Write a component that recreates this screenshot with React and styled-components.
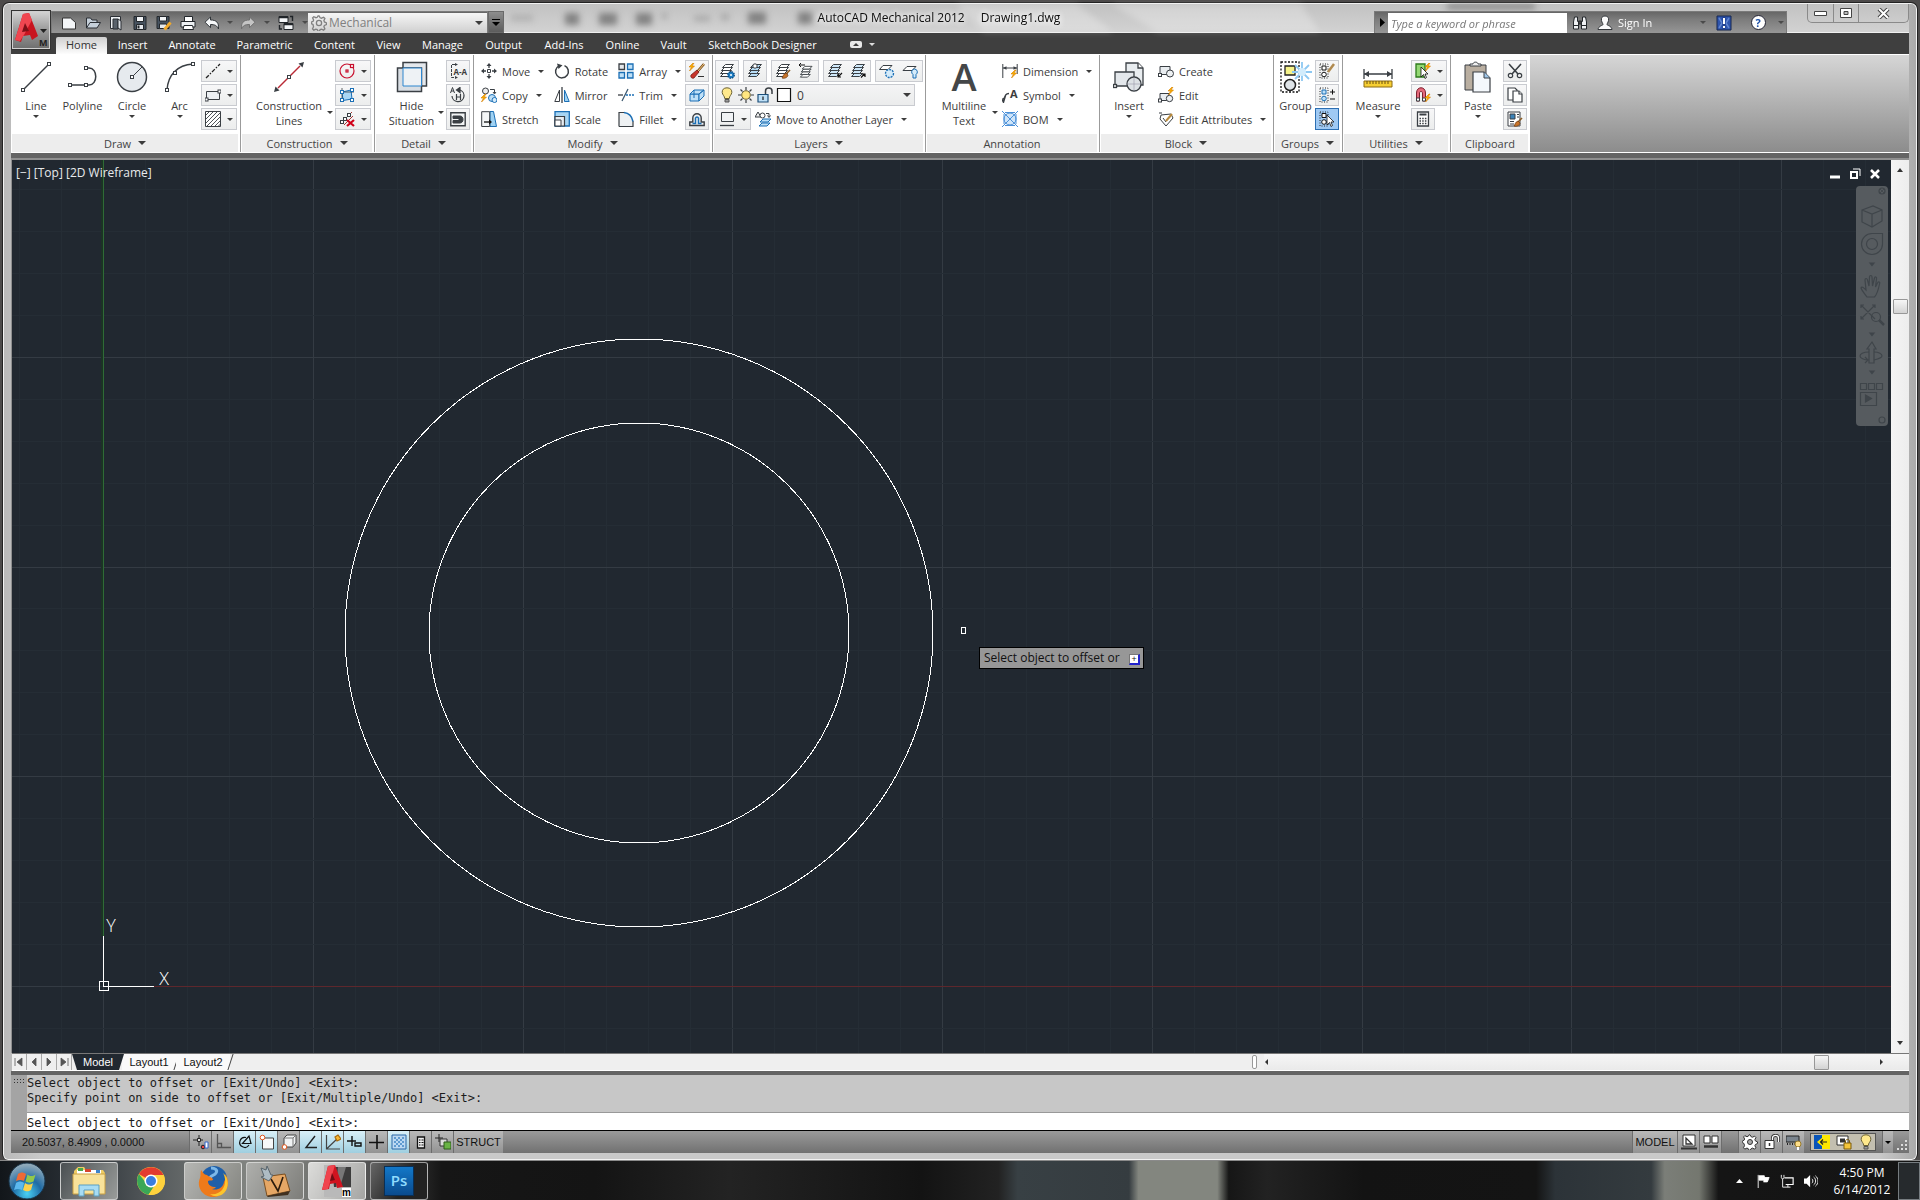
import React from "react";
import styled, { createGlobalStyle, css } from "styled-components";

const UI = '"Open Sans", "Noto Sans", sans-serif';
const SANS = '"Liberation Sans", Arial, sans-serif';
const MONO = '"DejaVu Sans Mono", "Liberation Mono", monospace';

const GlobalStyle = createGlobalStyle`
  *, *::before, *::after { box-sizing: border-box; }
  body { margin: 0; background: #4c4a4a; font-family: ${UI}; font-size: 11px; color: #3c3c3c; overflow: hidden; }
  button, input, select { font: inherit; color: inherit; margin: 0; padding: 0; border: 0; background: none; border-radius: 0; }
  button { display: flex; align-items: center; justify-content: center; white-space: nowrap; }
  select { appearance: none; outline: none; }
  svg { display: block; flex: none; }
`;

/* ---------- icons ---------- */

const K = "#3a3f44";
const B = "#1b6fb5";
const LB = "#bfe0f7";
const bolt = (x, y) => (
  <path d={`M${x + 4} ${y}l-4 4h2.5l-2 4 5-5h-2.5l2-3z`} fill="#ffb300" stroke="#d27a00" strokeWidth=".6" />
);
const node = (x, y, c = K) => <rect key={`${x}-${y}`} x={x - 1.5} y={y - 1.5} width="3" height="3" fill="#fff" stroke={c} />;
const brush = (x, y) => (
  <g transform={`translate(${x} ${y})`}>
    <path d="M9 0L5 4" stroke="#8a5a20" strokeWidth="1.6" />
    <path d="M5 3l2 2c0 2-3 4-6 3 1-1 1-4 4-5z" fill="#c8742a" stroke="#6b3a10" strokeWidth=".7" />
  </g>
);
const sheets = (c = "#fff") => (
  <g fill={c} stroke={K}>
    <path d="M4.500 10.500h8l-3 3h-8z" />
    <path d="M4.500 7.500h8l-3 3h-8z" />
    <path d="M5.500 4.500h8l-3 3h-8z" />
    <path d="M6.500 1.500h8l-3 3h-8z" />
  </g>
);
const gearPath =
  "M8 .8l1.200 2 1.300.4L12.600 2.200l1.300 1.300-1 2.100.5 1.300 2.100 1v1.600l-2.100 1-.5 1.200 1 2.100-1.300 1.300-2.100-1-1.300.5-1 1.700H7.200l-1-1.700-1.300-.5-2.100 1-1.300-1.300 1-2.100L2 9.500.3 8.600V7.200l1.800-1 .5-1.200-1-2.100 1.200-1.200 2.200 1 1.200-.4.900-1.500z";

const ICONS = {
  /* quick access */
  new: <path d="M1.500 3h8l5 4.500V14h-13z" fill="#f4f6f8" stroke="#333" />,
  open: <path d="M1.500 13V3h4l1.500 2h5v2.500M1.500 13L5 7.500h10.500L12 13z" fill="#c6d0da" stroke="#2b2f35" />,
  sheetset: <g stroke="#2b2f35"><path d="M2.500 1.500h10v12h-10z" fill="#eef1f4" /><path d="M5 4h5v10H5z" fill="#59626c" /><path d="M10 4l3 2v9l-3-2z" fill="#dfe4e9" /></g>,
  save: <g stroke="#22262b"><path d="M2 1.500h12v13H2z" fill="#46525f" /><path d="M4.500 1.500h7v5h-7z" fill="#f2f4f6" /><path d="M4.500 9.500h7v5h-7z" fill="#e5e9ed" /><path d="M6.500 10.500v3" strokeWidth="2" /></g>,
  saveas: <g stroke="#22262b"><path d="M1 1.500h12v12H1z" fill="#46525f" /><path d="M3.500 1.500h7v4.500h-7z" fill="#f2f4f6" /><path d="M3.500 9h7v4.500h-7z" fill="#e5e9ed" /><path d="M14.500 7.500l-6 7" stroke="#f0a92c" strokeWidth="3" /></g>,
  print: <g stroke="#22262b"><path d="M4.500 1.500h8v5h-8z" fill="#fff" /><path d="M1 6.500h14v5.500H1z" fill="#eceff2" /><path d="M4 10.500h8.500l1 4h-10.500z" fill="#fff" /></g>,
  undo: <path d="M6.500 2v3c6 0 8.500 2.500 8 9-1.500-3.500-3.500-4.500-8-4.500v3.200L1 7.200z" fill="#f7f9fa" stroke="#30353a" />,
  redo: <path d="M9.500 2v3c-6 0-8.500 2.500-8 9 1.500-3.500 3.500-4.500 8-4.500v3.200L15 7.200z" fill="#c4c4c4" stroke="#6f6f6f" />,
  switch: <g stroke="#202428"><path d="M1 1.500h9v6H1zM6 8.500h9v6H6z" fill="#f4f6f8" /><path d="M1 2.500h9M6 9.500h9" strokeWidth="1.500" /><path d="M12 1.500h2.500V6M1.500 10v4H4" fill="none" strokeWidth="1.400" /></g>,
  gear: <g fill="none" stroke="currentColor" strokeWidth="1.300"><path d={gearPath} /><circle cx="8" cy="8" r="2.600" /></g>,
  binoc: <g fill="#f0f2f4" stroke="#24282c"><path d="M2.500 2h3v4l1 1.500V14h-5V7zM10.500 2h3l1 5v7h-5V7.500l1-1.500z" /><path d="M6.500 6h3v3h-3z" fill="#444" /><path d="M1.500 10.500h5M9.500 10.500h5" /></g>,
  person: <path d="M8 1c3 0 4 2 3.500 4.500C11 8 10 8.500 10 9.500c0 1 4.500 1.200 5 5H1c.5-3.800 5-4 5-5 0-1-1-1.500-1.500-4C4 3 5 1 8 1z" fill="#fbfbfb" stroke="#33373b" />,
  exchange: <g><path d="M1 1h14v14H1z" fill="#2f55ad" stroke="#16264f" /><path d="M3 3l3 5-3 5M13 3l-3 5 3 5" fill="none" stroke="#6286d0" strokeWidth="1.500" /><path d="M6.500 1.500h3v13h-3z" fill="#23418c" /><path d="M8 3v6M8 11v2" stroke="#fff" strokeWidth="2" /></g>,
  /* draw */
  line: <g stroke={K}><path d="M4 28L28 4" strokeWidth="1.500" />{node(3, 29)}{node(29, 3)}</g>,
  polyline: <g stroke={K} fill="none" strokeWidth="1.500"><path d="M18 7h4c9 0 9 17 0 17H3" /><g strokeWidth="1">{node(19, 7)}{node(19, 24)}{node(3, 24)}</g></g>,
  circle: <g stroke={K}><circle cx="16" cy="16" r="14.500" fill="#e6eaee" strokeWidth="1.500" /><path d="M16 16L26 6" />{node(16, 16)}</g>,
  arc: <g stroke={K} fill="none" strokeWidth="1.500"><path d="M3 29C4 14 13 4 29 3" /><g strokeWidth="1">{node(3, 29)}{node(11, 12)}{node(29, 3)}</g></g>,
  dashline: <path d="M1 15L15 1" stroke="#222" strokeWidth="1.300" strokeDasharray="4 1.500 1.500 1.500" />,
  rect: <g stroke={K}><path d="M1.500 4.500h13v8h-13z" fill="#eceff2" />{node(1.5, 12.5)}{node(14.5, 4.500)}</g>,
  hatch: <g stroke={K}><path d="M.5.500h15v15H.5z" fill="#fff" /><path d="M.5 4.500l4-4M.5 8.500l8-8M.5 12.500l12-12M1.500 15.500l14-14M5.500 15.500l10-10M9.500 15.500l6-6M13 15.500l2.500-2.500" strokeWidth=".9" /></g>,
  /* construction */
  cline: <g><path d="M5 27L27 5" stroke="#b92b36" strokeWidth="1.400" /><path d="M31 1l-1.500 5.500-4-4zM1 31l1.500-5.500 4 4z" fill={K} />{node(16, 16)}</g>,
  ccircle: <g stroke="#c8102e" fill="none" strokeWidth="1.200"><circle cx="8" cy="8" r="7" /><rect x="7" y="7" width="2" height="2" />{node(13, 3, "#c8102e")}</g>,
  cpoly: <g stroke={B}><path d="M3 5l9-2 1 9-9 1.500z" fill="#a9d6f5" /><path d="M1 5h14M3 1v14" stroke={K} strokeWidth=".8" />{node(3, 13, B)}{node(13, 3, B)}{node(13, 13, B)}{node(3, 5, B)}</g>,
  cdel: <g><path d="M1 13L13 1M5 14l9-9" stroke="#a33" /><g stroke={K}>{node(6, 8)}{node(10, 4)}{node(3, 11)}</g><path d="M8 9l7 6M15 9l-7 6" stroke="#d00018" strokeWidth="2.200" /></g>,
  /* detail */
  hide: <g><path d="M7 1.500h23.500V25H7z" fill="#e4e8ec" stroke={K} strokeWidth="1.500" /><path d="M1.500 7h24v23.500h-24z" fill="#d9dee3" stroke={K} strokeWidth="1.500" /><path d="M7 7h18.500v18H7z" fill="#eef2f5" stroke="#2d86cf" /></g>,
  section: <g stroke={K} fill="none"><path d="M5 1.500H1.500v13H5" strokeDasharray="3 1" /><path d="M5 0l3 1.500L5 3zM5 13l3 1.500L5 16z" fill={K} stroke="none" /></g>,
  detaila: <g stroke={K} fill="none" strokeWidth="1.200"><path d="M2 9a6 6 0 1 0 8-6" /><path d="M10 0.500L6.500 3 10 5.500z" fill={K} /><path d="M6.500 7v6M10.500 7v6M6.500 10h4" /><path d="M.5 6L2.500 0.500 4.500 6M1 4h3" strokeWidth="1" /></g>,
  cutout: <g stroke={K}><path d="M.8 1.800h14.400v13H.8z" fill="#f2f4f5" strokeWidth="1.400" /><path d="M3 5h7c4 0 4 7 0 7H3V9.500h6V7.500H3z" fill={K} /></g>,
  /* modify */
  move: <g fill={K}><path d="M8 0l2.500 3h-5zM8 16l-2.500-3h5zM0 8l3-2.500v5zM16 8l-3 2.500v-5z" /><path d="M8 3v2M8 11v2M3 8h2M11 8h2" stroke={K} strokeWidth="1.300" /><path d="M6.500 6.500h3v3h-3z" fill="#fff" stroke={K} /></g>,
  copy: <g><circle cx="4.500" cy="4" r="3" fill="#eee" stroke={K} /><circle cx="11" cy="11" r="3.500" fill={LB} stroke={B} /><circle cx="13.500" cy="13" r="2.500" fill="#d6ecfb" stroke={B} /><path d="M9 2.500h4.500V6M12 5l1.500 2L15 5" fill="none" stroke={K} />{bolt(0, 7)}</g>,
  stretch: <g><path d="M9 .5h3.500l3 15H9z" fill="#9fd2f3" stroke={B} /><path d="M.7.700h8v14.800h-8z" fill="#f4f6f7" stroke={K} /><path d="M3 11h5" stroke="#111" strokeWidth="1.300" /><path d="M8 8.500l3 2.500-3 2.500z" fill="#111" /></g>,
  rotate: <g fill="none" stroke={K} strokeWidth="1.500"><path d="M10.500 2.600a6.400 6.400 0 1 1-5.500.2" /><path d="M3 0.500l5.500 1.800L4.500 6z" fill={K} stroke="none" /></g>,
  mirror: <g><path d="M5.500 3v11.500H.8z" fill="#fff" stroke={K} /><path d="M10.500 3v11.500h4.700z" fill="#9fd2f3" stroke={B} /><path d="M8 0v16" stroke={K} strokeWidth="1.300" /></g>,
  scale: <g><path d="M1 .700h14.300V15H1z" fill="#a8d6f4" stroke={B} strokeWidth="1.300" /><path d="M1 5.500h9.500V15H1z" fill="#e8edf1" stroke={K} strokeWidth="1.200" /><path d="M1 9h6v6H1z" fill="#fff" stroke={K} /></g>,
  array: <g strokeWidth="1.300"><path d="M1 1h5.500v5.500H1z" fill="#e6e9ec" stroke={K} /><path d="M9.500 1H15v5.500H9.500zM1 9.500h5.500V15H1zM9.500 9.500H15V15H9.500z" fill={LB} stroke={B} /></g>,
  trim: <g fill="none"><path d="M4 14L10 2" stroke="#39566e" strokeWidth="1.200" /><path d="M0 8h5" stroke={K} strokeWidth="1.300" /><path d="M8 8h8" stroke={B} strokeWidth="1.300" strokeDasharray="2 1" /></g>,
  fillet: <g><path d="M1 1h5c5 1 8 4 9 9v5H1z" fill="#eef1f3" /><path d="M1 1.500h5M1 1v14.500M15 10v5.500H1" fill="none" stroke={K} strokeWidth="1.200" /><path d="M6 1.500c5 .5 8 4 9 9" fill="none" stroke={B} strokeWidth="1.500" /></g>,
  erase: <g><path d="M15 1L8 9" stroke="#7b4a12" strokeWidth="2.500" /><path d="M15 1L9 8" stroke="#f0cf90" strokeWidth="1" /><path d="M8 7l2 2-5 6c-2 1-4-1-3-3z" fill="#c8352b" stroke="#68140f" strokeWidth=".7" /><path d="M9 13.500h6" stroke="#333" />{bolt(0, 0)}</g>,
  box3d: <g fill={LB} stroke={B}><path d="M1 7h9v7H1z" /><path d="M1 7l4-4h10l-5 4zM10 14V7l5-4v6z" /><path d="M5 3v8" fill="none" /></g>,
  offset: <g fill="none"><path d="M.8 14.500V11h3V7a4.200 4.200 0 0 1 8.400 0v4h3v3.500z" stroke={K} strokeWidth="1.400" fill="#eef1f3" /><path d="M3.500 12.500h3V7a1.600 1.600 0 0 1 3 0v5.500h3" stroke={B} strokeWidth="1.500" /></g>,
  /* layers */
  layprops: <g>{sheets()}<circle cx="12" cy="12" r="3.200" fill="#1e7fc4" stroke="#0d4f86" strokeDasharray="1.500 1" strokeWidth="1.500" /><circle cx="12" cy="12" r="1" fill="#fff" /></g>,
  layiso: <g>{sheets("#b7dcf5")}<circle cx="8" cy="3" r="2.200" fill="#fff" stroke={K} /></g>,
  laymatch: <g>{sheets()}{brush(6, 7)}</g>,
  layprev: <g transform="translate(1 2)"><g transform="scale(.9)">{sheets()}</g><path d="M0 0h6M2-2L0 0l2 2" fill="none" stroke="#111" /></g>,
  laydown: <g>{sheets("#cfe8f9")}<path d="M15 10l-3.500 3.500M11 11v3h3" fill="none" stroke="#111" strokeWidth="1.200" /></g>,
  layup: <g>{sheets("#cfe8f9")}<path d="M11 14.500l3.500-3.500M12 11h3v3" fill="none" stroke="#111" strokeWidth="1.200" /></g>,
  layfreeze: <g><path d="M4 2.500h9l-4 4H.5z" fill="#fff" stroke={K} /><circle cx="10.500" cy="10.500" r="4" fill="#d4ebfa" stroke={B} strokeDasharray="2 1" strokeWidth="1.300" /></g>,
  layoff: <g><path d="M5 3.500h9l-4 4H1z" fill="#fff" stroke={K} /><path d="M12.500 6a3 3 0 0 1 1.500 5.500V15h-3v-3.500A3 3 0 0 1 12.500 6z" fill="#d4ebfa" stroke={B} /></g>,
  bulb: <g><path d="M8 .8c3.500 0 5 2.300 4.800 4.700C12.500 8 10.300 9 10.300 11.500H5.700C5.700 9 3.500 8 3.200 5.500 3 3 4.500.8 8 .8z" fill="#ffe98c" stroke="#6b6236" /><path d="M6 12.500h4v2.500H6z" fill="#9a9a9a" stroke="#555" /></g>,
  sun: <g><path d="M8 0v3M8 13v3M0 8h3M13 8h3M2.500 2.500l2 2M11.500 11.500l2 2M13.500 2.500l-2 2M4.500 11.500l-2 2" stroke={K} strokeWidth="1.200" /><circle cx="8" cy="8" r="4.300" fill="#ffe680" stroke="#6b6236" /></g>,
  unlock: <g><path d="M1 7.500h10v7.500H1z" fill={LB} stroke="#1c4f7a" strokeWidth="1.200" /><path d="M8.500 7V4c0-4 6.500-4 6.500 0v3" fill="none" stroke={K} strokeWidth="1.500" /><path d="M6 9.500v3.500" stroke={K} strokeWidth="1.500" /></g>,
  swatch: <path d="M1.500 1.500h13v13h-13z" fill="#fff" stroke="#111" strokeWidth="1.200" />,
  partref: <g stroke={K}><path d="M2.500 1.500h12v9h-12z" fill="#f1f3f5" /><path d="M1 14.500h14" strokeWidth="1.300" /></g>,
  movelayer: <g><path d="M3 1l3 5H0z" fill="#eee" stroke={K} /><circle cx="7.500" cy="4.500" r="2.500" fill="#fff" stroke={K} /><path d="M11 2.500h3v3M12.500 4.500L14 6.500l1.500-2" fill="none" stroke={K} /><path d="M8 8h8l-3 3H5zM7 12h8l-3 3H4z" fill={LB} stroke={B} /></g>,
  /* annotation */
  dimension: <g stroke={K}><path d="M.8 1v14M15.200 1v10M1 5h14" fill="none" /><path d="M1 5l3.500-1.800v3.600zM15 5l-3.500-1.800v3.600z" fill={K} stroke="none" />{bolt(9, 7)}</g>,
  symbol: <path d="M0 12.500l1.500 3 1.500-5zM1.500 14C3 8 4 6.500 7 6.500" fill="none" stroke={K} strokeWidth="1.300" />,
  bom: <g stroke="#4a90d9" fill="none"><circle cx="8" cy="8" r="6" fill="#cfe5f9" /><path d="M0 0l16 16M16 0L0 16M3 1.500h10M3 14.500h10M2 3v10M14 3v10" /></g>,
  /* block */
  insert: <g stroke={K} strokeWidth="1.300"><path d="M13 2h12l5 5v17H13z" fill="#e9edf0" /><path d="M25 2v5h5" fill="#fff" /><path d="M2 11h19v14H2z" fill="#e3e7eb" />{node(2, 25)}<circle cx="21" cy="23" r="7" fill="#dde2e6" /><path d="M14 23h14M21 16v14" stroke="#99a" strokeWidth=".6" /></g>,
  create: <g stroke={K}><path d="M2 3.500h10v8H2z" fill="#e9edf0" /><circle cx="12" cy="10.500" r="3.500" fill="#eef1f3" />{node(2, 12)}</g>,
  bedit: <g stroke={K}><path d="M2 6.500h9v7H2z" fill="#e9edf0" /><circle cx="11.500" cy="11.500" r="3.200" fill="#eef1f3" />{node(2, 13.500)}{bolt(10, 0)}</g>,
  eattr: <g stroke={K}><path d="M1 2h3M3 4l10-1 2 4-7 8-6-7z" fill="#fff" /><path d="M5 7l3 4" fill="none" /><path d="M14 3L8 10" stroke="#b98a3c" strokeWidth="2" /></g>,
  /* groups */
  group: <g><path d="M1 1h18v30H1z" fill="none" stroke="#111" strokeDasharray="2 1.500" strokeWidth="1.300" /><path d="M5 5h10v9H5z" fill="#f5f38a" stroke="#222" strokeWidth="1.300" /><circle cx="10" cy="24" r="5.500" fill="#dfe4e8" stroke="#222" strokeWidth="1.500" /><path d="M22 1v19M12 11h20M15 4l14 14M29 4L15 18" stroke="#8dc8f2" strokeWidth="1.800" /><circle cx="22" cy="11" r="4" fill="#d2ecfc" /></g>,
  gedit: <g><path d="M1 1h8v14H1z" fill="none" stroke="#222" strokeDasharray="1 1.500" /><path d="M3 3h4v4H3z" fill="#fff" stroke="#111" /><circle cx="5" cy="11.500" r="2.300" fill="#fff" stroke="#111" /><path d="M15 1L9 9" stroke="#b08a50" strokeWidth="2.500" /></g>,
  gadd: <g><path d="M1 1h8v14H1z" fill="none" stroke="#222" strokeDasharray="1 1.500" /><path d="M3 3h4v4H3z" fill={LB} stroke={B} /><circle cx="5" cy="11.500" r="2.300" fill={LB} stroke={B} /><path d="M11 5h5M13.500 2.500v5M11 12h5" stroke="#111" /></g>,
  gsel: <g><path d="M1 1h8v14H1z" fill="none" stroke="#222" strokeDasharray="1 1.500" /><path d="M3 2.500h4v4H3z" fill="#fff" stroke="#111" /><circle cx="5" cy="11" r="2.300" fill="#fff" stroke="#111" /><path d="M8 4v10l2.500-2.500 1.500 4 1.500-1-1.500-3.500H15z" fill="#fff" stroke="#111" strokeWidth=".8" /></g>,
  /* utilities */
  measure: <g><path d="M2 8v10M30 8v10M2 13h28" stroke={K} strokeWidth="1.300" /><path d="M2 13l5-3v6zM30 13l-5-3v6z" fill={K} /><path d="M2 20h28v6H2z" fill="#f7cf33" stroke="#8c6a12" /><path d="M5 20v3M8 20v3M11 20v3M14 20v3M17 20v3M20 20v3M23 20v3M26 20v3" stroke="#6b5010" /></g>,
  qselect: <g><path d="M1 1h9v13H1z" fill="#93d873" stroke="#2c7a1b" strokeWidth="1.300" /><path d="M6 4v10l2.500-2.500 1.500 4 1.500-1-1.500-3.500H13z" fill="#fff" stroke="#111" strokeWidth=".8" />{bolt(10, 0)}</g>,
  magnet: <g><path d="M1.500 14V6c0-7 9-7 9 0v8h-3V6c0-2-3-2-3 0v8z" fill="#e56a7c" stroke="#7d2230" /><path d="M1.500 11h3v3h-3zM7.500 11h3v3h-3z" fill="#fff" stroke={K} />{bolt(10, 7)}</g>,
  calc: <g><path d="M2.500 1h11v14h-11z" fill="#fff" stroke={K} strokeWidth="1.300" /><path d="M4.500 3.500h7" stroke={K} strokeWidth="2" /><path d="M4.500 7.500h7M4.500 10h7M4.500 12.500h7" stroke={K} strokeWidth="1.300" strokeDasharray="1.500 1.200" /></g>,
  /* clipboard */
  paste: <g stroke={K}><path d="M3 4h21v25H3z" fill="#b9aea0" /><path d="M8 5V3h3c0-2.500 5-2.500 5 0h3v2z" fill="#eee" /><path d="M11 11h11l6 6v14H11z" fill="#f4f8fc" strokeWidth="1.200" /><path d="M22 11v6h6" fill="#9ec5e8" /></g>,
  cut: <g stroke={K} fill="none" strokeWidth="1.200"><path d="M2 1l9 10M14 1L5 11" strokeWidth="1.600" /><circle cx="3.500" cy="12.500" r="2.200" /><circle cx="12.500" cy="12.500" r="2.200" /></g>,
  copyclip: <g fill="#fff" stroke={K} strokeWidth="1.200"><path d="M1 1h7l2 2v10H1z" /><path d="M6 4h6l3 3v8H6z" /><path d="M12 4v3h3" /></g>,
  matchprop: <g><path d="M1 1h12v14H1z" fill="#fff" stroke={K} /><path d="M3 3h5v5H3z" fill="#3b82b8" stroke={K} /><path d="M10 3.500h2M10 6h2M3 10.500h4M3 13h4" stroke={K} />{brush(6, 7)}</g>,
  /* status */
  infer: <g stroke="#222"><path d="M0 6h10M6 1v11" /><path d="M4.500 4.500h3v3h-3z" fill="#ddd" /><circle cx="10" cy="13" r="1.800" fill="#e44" /><path d="M12 8h3v6h-3z" fill="#fff" stroke="#36c" /></g>,
  ortho: <path d="M2.500 0v13.500H16M2.500 9.500h4v4" fill="none" stroke="#555" strokeWidth="1.300" />,
  polar: <g fill="none" stroke="#111" strokeWidth="1.200"><path d="M9 3.500A5 5 0 1 0 12 11" /><path d="M5.500 9.500H14L12 2z" /></g>,
  osnap: <g><path d="M3.500 4h11v11h-11z" fill="#f6f8f9" stroke="#444" /><circle cx="3.500" cy="3.500" r="2.300" fill="#fff" stroke="#e2571d" /></g>,
  osnap3: <g><path d="M3 4l3-3h9v8l-3 4H3z" fill="#f0f2f3" stroke="#444" /><path d="M3 4h9v9M12 4l3-3" fill="none" stroke="#777" /><circle cx="3.500" cy="13" r="2.300" fill="#fff" stroke="#e2571d" /></g>,
  otrack: <path d="M12 2L3 13.500h11" fill="none" stroke="#222" strokeWidth="1.400" />,
  ducs: <g fill="none" stroke="#444" strokeWidth="1.200"><path d="M1.500 1v14H15M1.500 15L13 4" /><path d="M10 3l3-2 3 4-4 2z" fill="#f7b733" stroke="#a86a0c" /></g>,
  dyn: <path d="M0 7h9M5 2v10M8 9h6v3H8z" fill="none" stroke="#111" strokeWidth="1.400" />,
  lwt: <path d="M0 8.500h15M8 1v14" stroke="#111" strokeWidth="1.600" fill="none" />,
  tpy: <g><path d="M1 1h14v14H1z" fill="#bcd9f2" stroke="#2b69a8" /><path d="M3 3h2v2H3zM7 3h2v2H7zM11 3h2v2h-2zM5 5h2v2H5zM9 5h2v2H9zM3 7h2v2H3zM7 7h2v2H7zM11 7h2v2h-2zM5 9h2v2H5zM9 9h2v2H9zM3 11h2v2H3zM7 11h2v2H7zM11 11h2v2h-2z" fill="#5f9bd1" /></g>,
  qp: <g><path d="M4.500 3h7v11h-7z" fill="#eee" stroke="#111" strokeWidth="1.300" /><path d="M6 6h1.500M8.500 6h2M6 8.500h1.500M8.500 8.500h2M6 11h1.500M8.500 11h2" stroke="#111" /></g>,
  cycle: <g><path d="M0 4h8M4 0v8" stroke="#222" /><path d="M5 5h7v7H5z" fill="#ddd" stroke="#333" /><path d="M9 8h7v7H9z" fill="#69b345" stroke="#2e5f1b" /></g>,
  modelsp: <g stroke="#333"><path d="M2 1h12v11H2z" fill="#fff" /><path d="M5 4v6h6z" fill="none" strokeWidth="1.300" /><path d="M0 14.500h16" strokeWidth="2" /></g>,
  qvl: <g stroke="#333"><path d="M1 2h6v7H1zM9 2h6v7H9z" fill="#fff" /><path d="M1 12.500h14" strokeWidth="2.500" /></g>,
  stgear: <g stroke="#333" fill="#fff"><path d={gearPath} /><circle cx="8" cy="8" r="2.500" fill="#aaa" /></g>,
  stlock: <g><path d="M8.500 7V4c0-3.500 6-3.500 6 0v4" fill="none" stroke="#333" strokeWidth="3" /><path d="M8.500 7V4c0-3.500 6-3.500 6 0v4" fill="none" stroke="#fff" strokeWidth="1.300" /><path d="M1 6.500h9v8H1z" fill="#fff" stroke="#333" /><path d="M5.500 9v3" stroke="#333" strokeWidth="1.500" /></g>,
  sthw: <g><path d="M0 2h13v6H0z" fill="#7a848e" stroke="#222" /><path d="M1 10h9" stroke="#222" strokeDasharray="1 1.500" strokeWidth="2" /><circle cx="12" cy="10" r="3" fill="#ffdf8a" stroke="#9a7b2a" /><path d="M12 13v3" stroke="#fff" strokeWidth="2" /></g>,
  comm: <g><path d="M0 1h8v14H0z" fill="#0a55b8" /><path d="M8 1h8v14H8z" fill="#ffe800" /><path d="M13 8H5" stroke="#ffe800" strokeWidth="4" /><path d="M9 3L3 8l6 5z" fill="#ffe800" /><path d="M13 8H7M9 5.500L6.500 8 9 10.500" fill="none" stroke="#222" strokeWidth="1.200" /></g>,
  annlock: <g><path d="M1 2h11v9H1z" fill="#fff" stroke="#333" /><path d="M4 4.500h5v4H4z" fill="#333" /><path d="M8 9h7v6H8z" fill="#f4c53a" stroke="#7d5c0c" /><path d="M9.500 9V7c0-2 4-2 4 0v2" fill="none" stroke="#7d5c0c" /></g>,
  /* tray */
  flag: <path d="M2.500 1v15M3.500 2h6v5h-6zM9 4h6l-2 5H8.500" fill="#fff" stroke="#fff" />,
  net: <g fill="none" stroke="#fff"><path d="M5 4.500h10v7.500H6.500" strokeWidth="1.300" /><path d="M1.500 1v3c0 2 3 2 3 0V1M3 5.500V15h9M9 12v3" /></g>,
  sound: <g fill="#fff"><path d="M0 5h3l4-4v14l-4-4H0z" /><path d="M9 5.500c1.500 1 1.500 4 0 5M11 3.500c3 2 3 7 0 9M13 2c4 3 4 9 0 12" fill="none" stroke="#fff" /></g>,
};

const Icon = ({ n, s = 16, v = 16 }) => (
  <svg width={s} height={s} viewBox={`0 0 ${v} ${v}`} aria-hidden="true" fill="none">
    {ICONS[n]}
  </svg>
);

const Caret = styled.span`
  flex: none;
  width: 0;
  height: 0;
  border: ${(p) => p.$s || 3}px solid transparent;
  border-bottom: 0;
  border-top-color: ${(p) => p.$c || "#3c3c3c"};
`;

/* ---------- window and header ---------- */

const Desktop = styled.div`
  height: 100vh;
  display: flex;
  flex-direction: column;
`;
const Frame = styled.div`
  flex: 1;
  min-height: 0;
  margin: 2px 2px 0;
  padding: 0 8px 7px;
  border: 1px solid #222;
  border-bottom: 0;
  border-radius: 7px 7px 6px 6px;
  box-shadow: inset 0 0 0 1px #f1f1f1;
  background: linear-gradient(90deg, #b9b9b9, #c9c9c9 2%, #c9c9c9 98%, #a9a9a9);
  display: flex;
  flex-direction: column;
`;
const Header = styled.header`
  display: grid;
  grid-template: 29px 21px / 40px 1fr;
  background: linear-gradient(#c2c2c2 0, #d2d2d2 28px, #f0f0f0 28px, #f0f0f0 29px, #3f3f3f 29px);
  margin-top: 1px;
`;
const AppButton = styled.button`
  grid-row: 1 / 3;
  height: 40px;
  margin-top: 6px;
  border: 1px solid #333;
  background: linear-gradient(#d5d5d5, #9a9a9a 50%, #6e6e6e);
  box-shadow: inset 0 0 0 1px #cfcfcf;
`;
const TitleRow = styled.div`
  display: flex;
  align-items: flex-end;
  position: relative;
`;
const Ghosts = styled.svg`
  position: absolute;
  left: 0;
  top: 0;
  width: 100%;
  height: 28px;
  filter: blur(3px);
`;
const DarkBar = styled.div`
  position: relative;
  height: 22px;
  width: ${(p) => p.$w}px;
  display: flex;
  align-items: center;
  background: linear-gradient(#666, #7c7c7c 35%, #969696);
  border: 1px solid #7a7a7a;
  border-bottom: 0;
`;
const Tool = styled.button`
  width: ${(p) => p.$w || 24}px;
  height: 21px;
`;
const Workspace = styled.label`
  flex: 1;
  height: 20px;
  display: flex;
  align-items: center;
  gap: 2px;
  padding: 0 4px 0 3px;
  color: #808080;
  background: linear-gradient(#f6f6f6, #cfcfcf);
  select { flex: 1; color: #808080; font-size: 12px; }
`;
const EdgeButton = styled.button`
  position: relative;
  width: ${(p) => p.$w}px;
  height: 22px;
  background: linear-gradient(#8d8d8d, #5c5c5c);
  border: 1px solid #6a6a6a;
  flex-direction: column;
  gap: 2px;
`;
const Bar = styled.span`
  width: 8px;
  height: 1px;
  background: #000;
`;
const TitleText = styled.h1`
  position: relative;
  flex: 1;
  display: flex;
  justify-content: center;
  gap: 16px;
  margin: 0;
  align-self: flex-start;
  padding-top: 5px;
  font-size: 12px;
  line-height: 17px;
  font-weight: 400;
  color: #0c0c0c;
  text-shadow: 0 0 6px #fff, 0 0 6px #fff;
`;
const SearchInput = styled.input`
  width: 179px;
  height: 20px;
  padding: 2px 0 0 3px;
  background: #fff;
  font-style: italic;
  &::placeholder { color: #777; opacity: 1; }
`;
const SignIn = styled.button`
  width: 40px;
  color: #fff;
  justify-content: flex-start;
`;
const Spacer = styled.span`
  flex: 1;
`;
const HelpDot = styled.span`
  width: 15px;
  height: 15px;
  border-radius: 50%;
  background: #fff;
  border: 1px solid #223;
  color: #1b4fa8;
  font-weight: 700;
  line-height: 13px;
  text-align: center;
`;
const WinButtons = styled.div`
  align-self: flex-start;
  position: relative;
  margin-left: 20px;
  width: 102px;
  height: 19px;
  display: flex;
  border: 1px solid #8a8a8a;
  border-top: 0;
  border-radius: 0 0 5px 5px;
  button { flex: 1; border-right: 1px solid #8a8a8a; }
  button:last-child { flex: 2; border-right: 0; }
`;
const TabRow = styled.nav`
  display: flex;
  align-items: flex-end;
  padding-left: 5px;
`;
const Tab = styled.button`
  width: ${(p) => p.$w}px;
  height: 17px;
  padding-bottom: 2px;
  color: #fff;
  ${(p) => p.$on && css`
    color: #333;
    background: linear-gradient(#cfcfcf, #fdfdfd);
    border-radius: 2px 2px 0 0;
  `}
`;
const MiniToggle = styled.button`
  width: 12px;
  height: 7px;
  margin: 0 7px 6px 22px;
  border-radius: 2px;
  background: #e8e8e8;
  span { transform: rotate(180deg); }
`;
const TabCaret = styled(Caret)`
  margin-bottom: 8px;
`;

/* ---------- ribbon ---------- */

const Ribbon = styled.section`
  display: flex;
  height: 99px;
  border-top: 1px solid #fff;
  border-bottom: 1px solid #fff;
  background: linear-gradient(#d6d6d6, #8c8c8c);
`;
const Panel = styled.div`
  width: ${(p) => p.$w}px;
  flex: none;
  background: #fff;
  border-right: 1px solid #9b9b9b;
  padding: 0 2px 0 1px;
  display: flex;
  flex-direction: column;
  &:last-of-type { border-right: 0; }
`;
const PanelBody = styled.div`
  height: 79px;
  padding: 5px 1px 0 ${(p) => p.$pl || 1}px;
  display: flex;
  justify-content: space-between;
`;
const PanelTitle = styled.button`
  height: 18px;
  gap: 7px;
  background: #ededed;
  color: #444;
`;
const Big = styled.button`
  width: ${(p) => p.$w}px;
  height: 72px;
  position: relative;
  flex-direction: column;
  justify-content: flex-start;
  padding-top: 1px;
  line-height: 15px;
  color: #3c3c3c;
  text-align: center;
  white-space: pre;
`;
const BigLabel = styled.span`
  margin-top: 5px;
`;
const BelowCaret = styled(Caret)`
  margin-top: 2px;
`;
const SideCaret = styled(Caret)`
  position: absolute;
  right: 2px;
  top: 51px;
`;
const Stack = styled.div`
  display: flex;
  flex-direction: column;
  gap: 2px;
  align-items: flex-start;
  width: ${(p) => (p.$w ? `${p.$w}px` : "auto")};
`;
const Split = styled.div`
  display: flex;
  height: 22px;
  border: 1px solid #c9cbd0;
  background: linear-gradient(#f7f7f8, #eceded);
  ${(p) => p.$on && css`
    border-color: #2c6fb3;
    background: #9fc9f3;
  `}
`;
const SplitPart = styled.button`
  width: ${(p) => p.$w}px;
  & + & { border-left: ${(p) => (p.$plain ? 0 : "1px solid #c9cbd0")}; }
`;
const Cmd = styled.button`
  height: 22px;
  gap: 5px;
  color: #3c3c3c;
`;
const CmdCaret = styled(Caret)`
  margin-left: 3px;
`;
const LayerRow = styled.div`
  display: flex;
  align-items: center;
  gap: 4px;
`;
const LayerSelect = styled.label`
  width: 200px;
  height: 22px;
  display: flex;
  align-items: center;
  gap: 3px;
  padding: 0 3px;
  border: 1px solid #c9cbd0;
  background: linear-gradient(#f4f4f5, #ebecec);
  select { flex: 1; font-size: 12px; padding-left: 2px; }
`;
const GlyphA = styled.span`
  height: 32px;
  font-size: 38px;
  font-weight: 600;
  line-height: 30px;
  color: #444648;
`;
const SymbolIcon = styled.span`
  display: flex;
  width: 16px;
  font-weight: 700;
  line-height: 14px;
  svg { margin-right: -8px; }
`;
const SectionIcon = styled.span`
  display: flex;
  width: 17px;
  align-items: center;
  font-size: 8px;
  font-weight: 700;
  svg { margin-right: -12px; }
`;

const Carets = { below: <BelowCaret />, side: <SideCaret /> };
const BigButton = ({ icon, label, w, caret, children }) => (
  <Big $w={w}>
    {children || <Icon n={icon} s={32} v={32} />}
    <BigLabel>{label}</BigLabel>
    {caret && Carets[caret]}
  </Big>
);
const SplitIcon = ({ n, caret, on, plain, children }) => (
  <Split $on={on}>
    <SplitPart $w={22} aria-label={n}>{children || <Icon n={n} />}</SplitPart>
    {caret && <SplitPart $w={12} $plain={plain} aria-label={`${n} options`}><Caret /></SplitPart>}
  </Split>
);
const PairIcon = ({ items }) => (
  <Split>
    {items.map((n, i) => <SplitPart key={n} $w={i ? 24 : 22} aria-label={n}><Icon n={n} /></SplitPart>)}
  </Split>
);
const Command = ({ n, label, caret, children }) => (
  <Cmd>
    {children || <Icon n={n} />}
    {label}
    {caret && <CmdCaret />}
  </Cmd>
);
const RibbonPanel = ({ title, w, pl, more = true, children }) => (
  <Panel $w={w}>
    <PanelBody $pl={pl}>{children}</PanelBody>
    <PanelTitle>{title}{more && <Caret $s={4} />}</PanelTitle>
  </Panel>
);

const TABS = [
  ["Home", 51], ["Insert", 51], ["Annotate", 68], ["Parametric", 77], ["Content", 63], ["View", 45],
  ["Manage", 63], ["Output", 59], ["Add-Ins", 62], ["Online", 55], ["Vault", 47], ["SketchBook Designer", 131],
];

/* ---------- drawing area ---------- */

const Strip = styled.div`
  height: ${(p) => p.$h}px;
  flex: none;
  background: #646464;
  border-bottom: ${(p) => (p.$line ? "2px solid #8f8f8f" : 0)};
`;
const Work = styled.main`
  flex: 1;
  min-height: 0;
  display: flex;
  border-left: 1px solid #8f8f8f;
  background: #efefef;
`;
const Canvas = styled.div`
  flex: 1;
  position: relative;
  overflow: hidden;
  background: #212830;
`;
const Drawing = styled.svg`
  position: absolute;
  left: 0;
  top: 0;
  width: 100%;
  height: 100%;
`;
const ViewLabel = styled.div`
  position: absolute;
  left: 4px;
  top: 5px;
  font-size: 12px;
  line-height: 16px;
  color: #e8eaec;
`;
const DocButtons = styled.div`
  position: absolute;
  right: 10px;
  top: 8px;
  display: flex;
  gap: 8px;
`;
const NavBar = styled.div`
  position: absolute;
  right: 3px;
  top: 26px;
  width: 32px;
  height: 240px;
  border-radius: 4px;
  background: #565b5f;
`;
const Prompt = styled.div`
  position: absolute;
  left: 967px;
  top: 487px;
  width: 165px;
  height: 22px;
  display: flex;
  align-items: center;
  justify-content: space-between;
  padding: 0 3px 2px 4px;
  border: 1px solid #000;
  background: #979797;
  color: #111;
  font-size: 12px;
`;
const PromptKey = styled.span`
  width: 11px;
  height: 11px;
  margin-top: 4px;
  background: #fff;
  border: 1px solid #777;
  border-right: 2px solid #2222cc;
  border-bottom: 2px solid #2222cc;
  font-size: 9px;
  line-height: 7px;
  text-align: center;
`;
const VScroll = styled.div`
  width: 18px;
  display: flex;
  flex-direction: column;
  align-items: center;
  padding: 7px 0;
  background: linear-gradient(90deg, #f4f4f4, #ededed);
`;
const Thumb = styled.button`
  width: 15px;
  height: 15px;
  border: 1px solid #979797;
  background: linear-gradient(#f6f6f6, #d3d3d3);
  border-radius: 1px;
  margin: ${(p) => p.$m || 0};
`;

const P = 41.95;
const OX = 91;
const OY = 826;
const range = (a, b) => Array.from({ length: b - a }, (_, i) => a + i);
const gridColor = (i) => (i % 5 === 0 ? "#343b43" : "#252d35");
const order = (a, b) => (a % 5 === 0) - (b % 5 === 0);

function Plan() {
  return (
    <Drawing aria-label="Drawing">
      <g strokeWidth="1" shapeRendering="crispEdges">
        {range(-2, 60).sort(order).map((i) => {
          const x = Math.round(OX + i * P) + 0.5;
          return <line key={`v${i}`} x1={x} x2={x} y1="0" y2="100%" stroke={gridColor(i)} />;
        })}
        {range(-8, 20).sort(order).map((i) => {
          const y = Math.round(OY - i * P) + 0.5;
          return <line key={`h${i}`} y1={y} y2={y} x1="0" x2="100%" stroke={gridColor(i)} />;
        })}
        <path d={`M${OX - 1} 0V${OY - 50}`} stroke="#1b3324" strokeWidth="3" />
        <path d={`M${OX + 0.5} 0V${OY - 50}`} stroke="#2f6b36" />
        <line x1={OX + 50} x2="100%" y1={OY + 0.5} y2={OY + 0.5} stroke="#5e272c" />
        <g stroke="#fff" fill="none">
          <circle cx="627" cy="473" r="294" />
          <circle cx="627" cy="473" r="210" />
          <path d={`M${OX + 0.5} ${OY - 50}V${OY + 0.5}H${OX + 51}`} />
          <rect x={OX - 3.5} y={OY - 4.5} width="9" height="9" />
          <rect x="949.5" y="467.5" width="4" height="6" />
        </g>
      </g>
      <g fill="#fff" fontFamily="Open Sans" fontWeight="300" fontSize="18" textAnchor="middle">
        <text x="99" y="772">Y</text>
        <text x="152" y="825">X</text>
      </g>
    </Drawing>
  );
}

function NavGlyphs() {
  return (
    <svg width="32" height="240" viewBox="0 0 32 240" fill="none" stroke="#3f454a" strokeWidth="1.200">
      <circle cx="26" cy="5" r="3" /><path d="M24 3l4 4M28 3l-4 4" strokeWidth=".8" />
      <path d="M6 24l11-4 9 4v11l-10 6-10-5zM6 24l10 4 10-4M16 28v13" />
      <path d="M16 47.500h10.500V58A10.500 10.500 0 1 1 16 47.500z" /><circle cx="16" cy="58" r="5.500" />
      <path d="M14 77h4l-2 2.500z" fill="#3f454a" />
      <path d="M11 111c-3-4-5-6-6-9 1-2 3 0 5 2l-1-10c0-2 2-2 2.500 0l1.500 6 .5-9c0-2 2.500-2 2.500 0l.5 9 2-8c.5-2 2.500-1 2 1l-1 8 2-4c1-2 3-1 2 1-1 5-2 10-5 13z" />
      <path d="M5 119l14 14M19 119L5 133M5 122v-3h3M16 119h3v3M5 130v3h3" /><circle cx="20" cy="131" r="4.500" /><path d="M23 134l5 5" strokeWidth="2.500" />
      <path d="M14 147h4l-2 2.500z" fill="#3f454a" />
      <path d="M13 177v-14h-2l5-7 4 7h-2v14z" /><path d="M13 166c-6 0-9 2-9 4s4 4 9 4M18 166c5 0 8 2 8 4s-4 3-8 4M9 171l3 3-3 3" />
      <path d="M14 185h4l-2 2.500z" fill="#3f454a" />
      <path d="M4.500 197.500h6v6h-6zM12.500 197.500h6v6h-6zM20.500 197.500h6v6h-6zM4.500 206.500h16v13h-16z" /><path d="M9.500 209v7l6-3.500z" fill="#3f454a" />
      <circle cx="26" cy="234" r="3" />
    </svg>
  );
}

/* ---------- layout tabs, command line, status ---------- */

const Bottom = styled.div`
  height: 18px;
  flex: none;
  display: flex;
  align-items: center;
  border-top: 1px solid #777;
  border-bottom: 1px solid #fff;
  margin-left: 1px;
  background: #efefef;
`;
const Seek = styled.button`
  width: 15px;
  height: 16px;
  border-right: 1px solid #a8a8a8;
`;
const SheetTab = styled.button`
  position: relative;
  width: 54px;
  height: 16px;
  font-family: ${SANS};
  color: #111;
  background: #fafafa;
  &::after {
    content: "";
    position: absolute;
    right: -1px;
    top: 0;
    height: 16px;
    width: 1px;
    background: #444;
    transform: skewX(-18deg);
  }
  ${(p) => p.$on && css`
    width: 52px;
    margin-right: -2px;
    z-index: 1;
    color: #fff;
    background: #212830;
    clip-path: polygon(0 0, 100% 0, calc(100% - 5px) 100%, 5px 100%);
  `}
`;
const HScroll = styled.div`
  width: 34%;
  height: 16px;
  display: flex;
  align-items: center;
  justify-content: space-between;
  padding: 0 25px 0 0;
  background: linear-gradient(#f6f6f6, #eaeaea);
`;
const Splitter = styled.span`
  width: 5px;
  height: 14px;
  border: 1px solid #999;
  border-radius: 2px;
  background: #fff;
  margin-right: 7px;
`;
const Console = styled.section`
  display: grid;
  grid-template-columns: 16px 1fr;
  flex: none;
  font-family: ${MONO};
  font-size: 12px;
  line-height: 15px;
  color: #1c1c1c;
  background: #a4a4a4;
  border-bottom: 1px solid #000;
`;
const Grip = styled.span`
  width: 11px;
  height: 5px;
  margin: 3px 0 0 2px;
  background-image: radial-gradient(#333 1px, transparent 1px);
  background-size: 3px 3px;
`;
const Log = styled.div`
  height: 38px;
  padding-top: 1px;
  background: #c7c7c7;
  border-bottom: 1px solid #999;
`;
const CommandInput = styled.input`
  width: 100%;
  height: 17px;
  grid-column: 2;
  background: #fff;
  padding-top: 2px;
  outline: none;
`;
const Status = styled.footer`
  height: 22px;
  flex: none;
  display: flex;
  align-items: center;
  font-family: ${SANS};
  color: #111;
  background: linear-gradient(#9a9a9a, #717171);
`;
const Coords = styled.output`
  width: 178px;
  padding-left: 11px;
`;
const StatusKey = styled.button`
  width: ${(p) => p.$w || 22}px;
  height: 22px;
  border-left: 1px solid #6d6d6d;
  background: ${(p) => (p.$on ? "linear-gradient(#d9f0f8, #9fcfe0)" : "linear-gradient(#b9b9b9, #939393)")};
`;
const StatusGap = styled.span`
  width: 17px;
  height: 22px;
  border-left: 1px solid #6d6d6d;
`;
const Tray = styled.div`
  display: flex;
  gap: 6px;
  padding: 0 5px 0 3px;
  height: 18px;
  width: 66px;
  align-items: center;
  margin: 0 6px;
  border: 1px solid #555;
  background: #c3bfb0;
`;

/* ---------- taskbar ---------- */

const Taskbar = styled.div`
  height: 40px;
  flex: none;
  display: flex;
  align-items: center;
  border-top: 1px solid #8a8a8a;
  background: linear-gradient(90deg, #12161a 0, #2a3036 4%, #555a5c 8%, #8b8d88 14%, #555 19%, #161616 23%, #141414 31%, #232323 38%, #131313 48%, #222 52%, #384044 53%, #353c40 58.8%, #83867f 59.3%, #83867f 63.4%, #161616 64%, #222 66%, #131313 71%, #141414 80%, #2c3338 81%, #343b3f 86%, #7b7e78 86.700%, #74776f 88.500%, #151515 89.500%, #141414 100%);
`;
const StartButton = styled.button`
  width: 54px;
  height: 38px;
`;
const TaskButton = styled.button`
  width: 58px;
  height: 38px;
  margin-left: ${(p) => (p.$first ? 6 : 4)}px;
  border-radius: 3px;
  ${(p) => p.$tone && css`
    border: 1px solid rgba(255, 255, 255, 0.55);
    background: ${p.$tone};
  `}
`;
const TrayIcon = styled.button`
  width: 24px;
  color: #fff;
`;
const Clock = styled.time`
  width: 72px;
  margin-left: 3px;
  text-align: center;
  font-size: 12px;
  line-height: 17px;
  color: #fff;
`;
const Peek = styled.button`
  width: 22px;
  height: 38px;
  border: 1px solid #767c80;
  background: #262a2d;
`;

const Logo = () => (
  <svg width="38" height="38" viewBox="0 0 38 38" fill="none">
    <path d="M11 3l6-1 9 23-6 4-2-5-7 1-2 6-6-2z" fill="#c8141f" />
    <path d="M11 3l6-1 3 7-8 15-4 6-5-1z" fill="#ef4650" />
    <path d="M13 12l4 8-7 1z" fill="#7c1017" />
    <path d="M28 18h7l-3.500 4z" fill="#222" />
    <text x="27" y="35" fontFamily="Open Sans" fontSize="9" fontWeight="700" fill="#222">M</text>
  </svg>
);
const Orb = () => (
  <svg width="38" height="38" viewBox="0 0 38 38">
    <defs><radialGradient id="orb" cx="50%" cy="85%" r="80%"><stop offset="0" stopColor="#49d1f3" /><stop offset=".5" stopColor="#1f6ba5" /><stop offset="1" stopColor="#8fa9b9" /></radialGradient></defs>
    <circle cx="19" cy="19" r="18" fill="url(#orb)" stroke="#183347" />
    <path d="M10 12c3-2 5-2 8 0l-2 7c-3-1.500-5-1.500-8 0z" fill="#ee6a35" />
    <path d="M19.500 12.500c3 2 5 2 8 0l-2 7c-3 1.500-5 1.500-8 0z" fill="#92c84b" />
    <path d="M8 21c3-2 5-2 8 0l-2 7c-3-1.500-5-1.500-8 0z" fill="#5cb8ee" />
    <path d="M17 21c3 2 5 2 8 0l-2 7c-3 2-5 1.500-8 0z" fill="#fbd14b" />
  </svg>
);
const Folder = () => (
  <svg width="34" height="32" viewBox="0 0 34 32">
    <path d="M2 6l4-4h6l2 3h17l2 3v20H2z" fill="#eecb63" /><path d="M5 5h24v8H5z" fill="#fff" /><path d="M6 3h5v3H6z" fill="#4aa84c" /><path d="M13 4h6v3h-6z" fill="#d6452f" /><path d="M24 5h4v3h-4z" fill="#3e84cc" />
    <path d="M1 9h32v20H1z" fill="#f8e29a" stroke="#c9a043" /><path d="M7 31V20h20v11h-5v-6H12v6z" fill="#a7dcf4" stroke="#5a9fc2" />
  </svg>
);
const Chrome = () => (
  <svg width="30" height="30" viewBox="0 0 30 30">
    <circle cx="15" cy="15" r="14" fill="#ffd23d" /><path d="M15 15L2.900 8A14 14 0 0 1 27.500 9H15z" fill="#e23b2e" /><path d="M2.900 8a14 14 0 0 0 9.600 20.700L20 17l-9 1z" fill="#3aa757" /><path d="M27.500 9H15l5.500 9-8 10.700A14 14 0 0 0 27.500 9z" fill="#ffd23d" />
    <circle cx="15" cy="15" r="6.500" fill="#fff" /><circle cx="15" cy="15" r="5" fill="#3b7ddd" />
  </svg>
);
const Fox = () => (
  <svg width="34" height="34" viewBox="0 0 34 34">
    <circle cx="18" cy="15" r="13" fill="#1f5fa8" /><path d="M15 4c4 0 7 2 5 5s-5 2-6 5" fill="none" stroke="#7db8e8" strokeWidth="3" />
    <path d="M5 6c-1 4 0 5-1 8-4 9 3 19 13 19 9 0 16-7 15-16-1-3-1-5-3-7 1 5 0 6-1 8-1 6-7 9-12 7 2 0 3-1 4-2-5 0-8-2-8-6 2-1 3 0 5-1 0-3-4-3-6-5-3 0-4-3-6-5z" fill="#ee7a1a" /><path d="M27 9c3 5 3 12-1 17-3 3-7 5-12 4 6 5 15 1 17-6 2-6 0-12-4-15z" fill="#fcc52d" />
  </svg>
);
const VaultBox = () => (
  <svg width="34" height="32" viewBox="0 0 34 32">
    <path d="M5 12l22-3 5 17-23 5z" fill="#e6a765" stroke="#7b4f20" /><path d="M32 26l-2 4-20 2-1-1z" fill="#40301f" /><path d="M13 14l7 12 5-14" fill="none" stroke="#2c1c0c" strokeWidth="1.600" /><path d="M3 3l5 2 1-4 4 9 2 0-4 6-8-4 3-1z" fill="#aebcc4" stroke="#58656d" />
  </svg>
);
const AcadIcon = () => (
  <svg width="34" height="34" viewBox="0 0 34 34">
    <path d="M4 1h27v32H4z" fill="#b9b9b9" /><path d="M12 3h19v20H14z" fill="#3c3c3c" /><path d="M18 3h8l-6 20h-4z" fill="#777" />
    <path d="M8 2l7-1 8 22-6 1-1-5-6 1-1 5-7 1z" fill="#d0131f" /><path d="M8 2l7-1-7 24-6 1z" fill="#f0444e" /><path d="M12 9l3 7-5 1z" fill="#6f0d14" />
    <path d="M22 24h9v9h-9z" fill="#fff" /><text x="22" y="32" fontFamily="Liberation Sans" fontSize="10" fontWeight="700" fill="#000">m</text>
  </svg>
);
const PsBadge = styled.span`
  width: 30px;
  height: 30px;
  border: 1px solid #0a2f55;
  background: linear-gradient(#1378c8, #0a4b8e);
  color: #8fdcff;
  font-size: 15px;
  font-weight: 600;
  line-height: 27px;
  text-align: center;
`;

const SNAPS = [
  ["infer"], ["ortho"], ["polar", 1], ["osnap", 1], ["osnap3"], ["otrack", 1],
  ["ducs", 1], ["dyn", 1], ["lwt"], ["tpy", 1], ["qp"], ["cycle"],
];
const TASKS = [
  ["Explorer", "linear-gradient(120deg, #4a4f52, #999c9a)", <Folder />],
  ["Chrome", null, <Chrome />],
  ["Firefox", "linear-gradient(120deg, #b5b6b3, #858681)", <Fox />],
  ["Vault", "linear-gradient(120deg, #aeafac, #7d7d79)", <VaultBox />],
  ["AutoCAD", "linear-gradient(120deg, #dcdcda, #a5a5a3)", <AcadIcon />],
  ["Photoshop", "linear-gradient(120deg, #666, #222 60%)", <PsBadge>Ps</PsBadge>],
];
const SEEK = [
  "M3 3v8M10 3L5 7l5 4z",
  "M9 3L5 7l4 4z",
  "M5 3l4 4-4 4z",
  "M4 3l5 4-5 4zM11 3v8",
];

export default function App() {
  return (
    <>
      <GlobalStyle />
      <Desktop>
        <Frame>
          <Header>
            <AppButton aria-label="Application menu"><Logo /></AppButton>
            <TitleRow>
              <Ghosts aria-hidden="true">
                <g fill="#6b6b6b" opacity=".75">
                  <path d="M460 11h22v6h-22z" opacity=".35" />
                  <path d="M514 9h14v12h-14zM548 9h18v12h-18zM585 9h16v12h-16zM697 8h18v12h-18zM747 8h14v12h-14z" />
                  <path d="M643 12h16v5h-16zM670 10h8v6h-8zM611 9h5v6h-5z" opacity=".5" />
                  <path d="M1396 0h88v5h-88z" />
                </g>
                <g fill="#fff" opacity=".25"><path d="M905 0h120l40 30h-130zM1060 0h190l20 30h-160z" /></g>
              </Ghosts>
              <DarkBar $w={437}>
                <Tool $w={34} aria-label="New"><Icon n="new" /></Tool>
                <Tool $w={14} aria-label="Open"><Icon n="open" /></Tool>
                <Tool $w={32} aria-label="Sheet set"><Icon n="sheetset" /></Tool>
                <Tool $w={16} aria-label="Save"><Icon n="save" /></Tool>
                <Tool $w={32} aria-label="Save as"><Icon n="saveas" /></Tool>
                <Tool $w={16} aria-label="Plot"><Icon n="print" /></Tool>
                <Tool $w={32} aria-label="Undo"><Icon n="undo" /></Tool>
                <Tool $w={4} aria-label="Undo list"><Caret $c="#4a4a4a" /></Tool>
                <Tool $w={32} aria-label="Redo"><Icon n="redo" /></Tool>
                <Tool $w={6} aria-label="Redo list"><Caret $c="#4a4a4a" /></Tool>
                <Tool $w={32} aria-label="Switch"><Icon n="switch" /></Tool>
                <Tool $w={6} aria-label="Switch list"><Caret $c="#4a4a4a" /></Tool>
                <Workspace>
                  <Icon n="gear" />
                  <select aria-label="Workspace"><option>Mechanical</option></select>
                  <Caret $s={4} />
                </Workspace>
              </DarkBar>
              <EdgeButton $w={16} aria-label="Customize"><Bar /><Caret $s={4} $c="#000" /></EdgeButton>
              <TitleText><span>AutoCAD Mechanical 2012</span><span>Drawing1.dwg</span></TitleText>
              <DarkBar $w={413}>
                <Tool $w={13} aria-label="Collapse search">
                  <svg width="6" height="9"><path d="M1 0l5 4.500L1 9z" fill="#000" /></svg>
                </Tool>
                <SearchInput aria-label="Search" placeholder="Type a keyword or phrase" />
                <Tool $w={25} aria-label="Search"><Icon n="binoc" /></Tool>
                <Tool $w={26} aria-label="User"><Icon n="person" /></Tool>
                <SignIn>Sign In</SignIn>
                <Spacer />
                <Tool $w={10} aria-label="Sign in menu"><Caret $c="#4a4a4a" /></Tool>
                <Tool $w={32} aria-label="Exchange"><Icon n="exchange" /></Tool>
                <Tool $w={36} aria-label="Help"><HelpDot>?</HelpDot></Tool>
                <Tool $w={10} aria-label="Help menu"><Caret $c="#4a4a4a" /></Tool>
              </DarkBar>
              <WinButtons>
                <button aria-label="Minimize"><svg width="13" height="6"><path d="M.5 1.500h12v4H.5z" fill="#fff" stroke="#444" /></svg></button>
                <button aria-label="Maximize"><svg width="12" height="10"><path d="M.5.500h11v9H.5z" fill="#fff" stroke="#444" /><path d="M4 3.500h4v3H4z" fill="#bbb" stroke="#444" /></svg></button>
                <button aria-label="Close"><svg width="13" height="11"><path d="M2 1l9 9M11 1l-9 9" stroke="#444" strokeWidth="4" /><path d="M2 1l9 9M11 1l-9 9" stroke="#fff" strokeWidth="2" /></svg></button>
              </WinButtons>
            </TitleRow>
            <TabRow>
              {TABS.map(([t, w], i) => <Tab key={t} $w={w} $on={i === 0}>{t}</Tab>)}
              <MiniToggle aria-label="Minimize ribbon"><Caret /></MiniToggle>
              <TabCaret $c="#ddd" />
            </TabRow>
          </Header>

          <Ribbon>
            <RibbonPanel title="Draw" w={230}>
              <BigButton icon="line" label="Line" w={46} caret="below" />
              <BigButton icon="polyline" label="Polyline" w={46} />
              <BigButton icon="circle" label="Circle" w={52} caret="below" />
              <BigButton icon="arc" label="Arc" w={42} caret="below" />
              <Stack>
                <SplitIcon n="dashline" caret /><SplitIcon n="rect" caret /><SplitIcon n="hatch" caret />
              </Stack>
            </RibbonPanel>
            <RibbonPanel title="Construction" w={134}>
              <BigButton icon="cline" label={"Construction\nLines"} w={92} caret="side" />
              <Stack>
                <SplitIcon n="ccircle" caret /><SplitIcon n="cpoly" caret /><SplitIcon n="cdel" caret />
              </Stack>
            </RibbonPanel>
            <RibbonPanel title="Detail" w={99}>
              <BigButton icon="hide" label={"Hide\nSituation"} w={70} caret="side" />
              <Stack>
                <SplitIcon n="section"><SectionIcon><Icon n="section" />A-A</SectionIcon></SplitIcon>
                <SplitIcon n="detaila" /><SplitIcon n="cutout" />
              </Stack>
            </RibbonPanel>
            <RibbonPanel title="Modify" w={239} pl={6}>
              <Stack $w={73}>
                <Command n="move" label="Move" caret /><Command n="copy" label="Copy" caret /><Command n="stretch" label="Stretch" />
              </Stack>
              <Stack $w={65}>
                <Command n="rotate" label="Rotate" /><Command n="mirror" label="Mirror" /><Command n="scale" label="Scale" />
              </Stack>
              <Stack $w={67}>
                <Command n="array" label="Array" caret /><Command n="trim" label="Trim" caret /><Command n="fillet" label="Fillet" caret />
              </Stack>
              <Stack>
                <SplitIcon n="erase" /><SplitIcon n="box3d" /><SplitIcon n="offset" />
              </Stack>
            </RibbonPanel>
            <RibbonPanel title="Layers" w={213}>
              <Stack>
                <LayerRow>
                  <SplitIcon n="layprops" /><SplitIcon n="layiso" />
                  <PairIcon items={["laymatch", "layprev"]} />
                  <PairIcon items={["laydown", "layup"]} />
                  <PairIcon items={["layfreeze", "layoff"]} />
                </LayerRow>
                <LayerSelect>
                  <Icon n="bulb" /><Icon n="sun" /><Icon n="unlock" /><Icon n="swatch" />
                  <select aria-label="Layer"><option>0</option></select>
                  <Caret $s={4} />
                </LayerSelect>
                <LayerRow>
                  <SplitIcon n="partref" caret />
                  <Command n="movelayer" label="Move to Another Layer" caret />
                </LayerRow>
              </Stack>
            </RibbonPanel>
            <RibbonPanel title="Annotation" w={174} more={false}>
              <BigButton label={"Multiline\nText"} w={72} caret="side"><GlyphA>A</GlyphA></BigButton>
              <Stack $w={94}>
                <Command n="dimension" label="Dimension" caret />
                <Command label="Symbol" caret><SymbolIcon><Icon n="symbol" />A</SymbolIcon></Command>
                <Command n="bom" label="BOM" caret />
              </Stack>
            </RibbonPanel>
            <RibbonPanel title="Block" w={174}>
              <BigButton icon="insert" label="Insert" w={54} caret="below" />
              <Stack $w={112}>
                <Command n="create" label="Create" /><Command n="bedit" label="Edit" /><Command n="eattr" label="Edit Attributes" caret />
              </Stack>
            </RibbonPanel>
            <RibbonPanel title="Groups" w={69}>
              <BigButton icon="group" label="Group" w={39} />
              <Stack><SplitIcon n="gedit" /><SplitIcon n="gadd" /><SplitIcon n="gsel" on /></Stack>
            </RibbonPanel>
            <RibbonPanel title="Utilities" w={108}>
              <BigButton icon="measure" label="Measure" w={66} caret="below" />
              <Stack><SplitIcon n="qselect" caret plain /><SplitIcon n="magnet" caret plain /><SplitIcon n="calc" /></Stack>
            </RibbonPanel>
            <RibbonPanel title="Clipboard" w={79} more={false}>
              <BigButton icon="paste" label="Paste" w={50} caret="below" />
              <Stack><SplitIcon n="cut" /><SplitIcon n="copyclip" /><SplitIcon n="matchprop" /></Stack>
            </RibbonPanel>
          </Ribbon>
          <Strip $h={7} $line />

          <Work>
            <Canvas>
              <Plan />
              <ViewLabel>[−] [Top] [2D Wireframe]</ViewLabel>
              <DocButtons>
                <button aria-label="Minimize drawing"><svg width="12" height="12"><path d="M1 9h10" stroke="#fff" strokeWidth="3" /></svg></button>
                <button aria-label="Restore drawing"><svg width="12" height="12" fill="none" stroke="#fff"><path d="M4 1h7v7" strokeWidth="1" /><path d="M2 4h6v6H2z" strokeWidth="2" /></svg></button>
                <button aria-label="Close drawing"><svg width="12" height="12"><path d="M2 2l8 8M10 2l-8 8" stroke="#fff" strokeWidth="2.500" /></svg></button>
              </DocButtons>
              <NavBar><NavGlyphs /></NavBar>
              <Prompt>Select object to offset or<PromptKey>+</PromptKey></Prompt>
            </Canvas>
            <VScroll>
              <svg width="8" height="5"><path d="M1 5l3-4 3 4z" fill="#333" /></svg>
              <Thumb $m="127px 0 auto" aria-label="Scroll vertically" />
              <svg width="8" height="5"><path d="M1 0l3 4 3-4z" fill="#333" /></svg>
            </VScroll>
          </Work>

          <Bottom>
            {SEEK.map((d) => <Seek key={d} aria-label="Browse layouts"><svg width="14" height="14"><path d={d} fill="#555" stroke="#555" strokeWidth=".8" /></svg></Seek>)}
            <SheetTab $on>Model</SheetTab><SheetTab>Layout1</SheetTab><SheetTab>Layout2</SheetTab>
            <Spacer />
            <Splitter />
            <HScroll>
              <svg width="5" height="8"><path d="M4 1L1 4l3 3z" fill="#333" /></svg>
              <Thumb $m="0 50px 0 auto" aria-label="Scroll horizontally" />
              <svg width="5" height="8"><path d="M1 1l3 3-3 3z" fill="#333" /></svg>
            </HScroll>
          </Bottom>
          <Strip $h={4} />

          <Console>
            <Grip />
            <Log>
              <div>Select object to offset or [Exit/Undo] &lt;Exit&gt;:</div>
              <div>Specify point on side to offset or [Exit/Multiple/Undo] &lt;Exit&gt;:</div>
            </Log>
            <CommandInput aria-label="Command line" defaultValue="Select object to offset or [Exit/Undo] <Exit>:" />
          </Console>

          <Status>
            <Coords>20.5037, 8.4909 , 0.0000</Coords>
            {SNAPS.map(([n, on]) => <StatusKey key={n} $on={on} aria-label={n}><Icon n={n} /></StatusKey>)}
            <StatusKey $w={50}>STRUCT</StatusKey>
            <Spacer />
            <StatusKey $w={45}>MODEL</StatusKey>
            <StatusKey aria-label="Model space"><Icon n="modelsp" /></StatusKey>
            <StatusKey aria-label="Quick view layouts"><Icon n="qvl" /></StatusKey>
            <StatusGap />
            <StatusKey aria-label="Workspace switching"><Icon n="stgear" /></StatusKey>
            <StatusKey aria-label="Lock toolbars"><Icon n="stlock" /></StatusKey>
            <StatusKey aria-label="Hardware acceleration"><Icon n="sthw" /></StatusKey>
            <Tray><Icon n="comm" /><Icon n="annlock" /><Icon n="bulb" /></Tray>
            <StatusKey $w={11} aria-label="Status menu"><Caret $c="#000" /></StatusKey>
            <svg width="16" height="20"><path d="M13 8v2M9 12v2M13 12v2M5 16v2M9 16v2M13 16v2" stroke="#ddd" strokeWidth="2" /></svg>
          </Status>
        </Frame>

        <Taskbar>
          <StartButton aria-label="Start"><Orb /></StartButton>
          {TASKS.map(([name, tone, art], i) => <TaskButton key={name} $tone={tone} $first={i === 0} aria-label={name}>{art}</TaskButton>)}
          <Spacer />
          <TrayIcon aria-label="Show hidden icons"><svg width="7" height="4"><path d="M0 4l3.500-4L7 4z" fill="#fff" /></svg></TrayIcon>
          <TrayIcon aria-label="Action center"><Icon n="flag" s={14} /></TrayIcon>
          <TrayIcon aria-label="Network"><Icon n="net" s={14} /></TrayIcon>
          <TrayIcon aria-label="Volume"><Icon n="sound" s={14} /></TrayIcon>
          <Clock>4:50 PM<br />6/14/2012</Clock>
          <Peek aria-label="Show desktop" />
        </Taskbar>
      </Desktop>
    </>
  );
}
